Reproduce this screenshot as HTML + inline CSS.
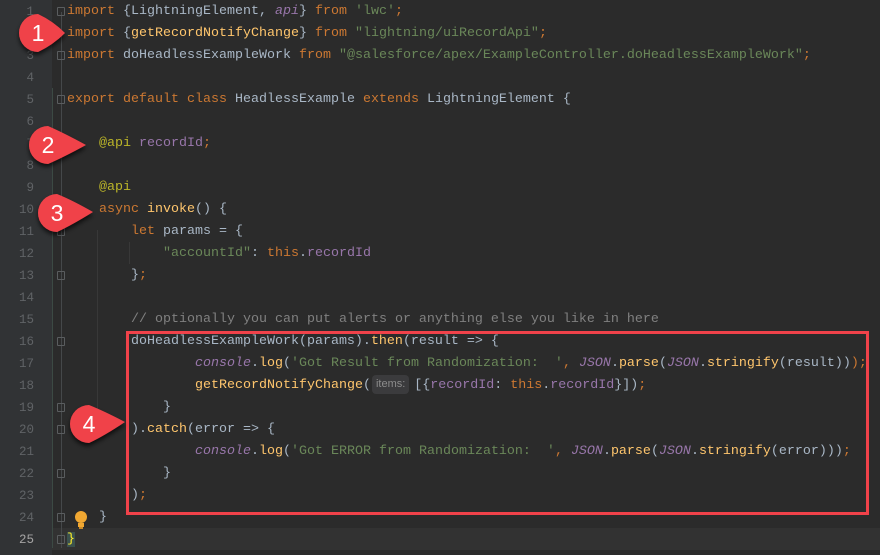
<!DOCTYPE html>
<html><head><meta charset="utf-8"><style>
html,body{margin:0;padding:0;}
body{width:880px;height:555px;background:#2b2b2b;position:relative;overflow:hidden;font-family:"Liberation Mono",monospace;font-size:13.33px;}
.g{position:absolute;left:0;top:0;width:52px;height:555px;background:#313335;}
.ln{position:absolute;left:0;width:34px;text-align:right;color:#606366;font-size:12.5px;line-height:22px;}
.l{position:absolute;left:67px;white-space:pre;line-height:22px;top:0;color:#a9b7c6;}
.k{color:#cc7832}.f{color:#ffc66d}.s{color:#6a8759}.p{color:#9876aa}.a{color:#bbb529}.c{color:#808080}.i{font-style:italic}
.hl{position:absolute;left:52px;right:0;top:528px;height:22px;background:#323232;}
.inl{display:inline-block;background:#3b3b3d;color:#8c8c8c;font-family:"Liberation Sans",sans-serif;font-size:11px;line-height:18px;height:19px;padding:0 4px;border-radius:4px;margin:0 5px 0 1px;vertical-align:1px;}
.box{position:absolute;left:126px;top:331px;width:737px;height:178px;border:3px solid #f0424a;}
.vg{position:absolute;width:1px;background:#3c4a44;}
.fold{position:absolute;left:57px;width:8px;height:9px;border:1px solid #5a5d5f;border-radius:1px;box-sizing:border-box;}
</style></head><body>
<div class="g"></div>
<div class="hl"></div>
<div class="vg" style="left:52px;top:88px;height:460px;"></div>
<div class="vg" style="left:61px;top:12px;height:536px;background:#45484a"></div>
<div class="vg" style="left:97px;top:230px;height:180px;background:#383838"></div>
<div class="vg" style="left:129px;top:242px;height:22px;background:#383838"></div>
<div id="nums"></div>
<div class="l" style="top:1px"><span class="k">import </span>{LightningElement, <span class="p i">api</span>} <span class="k">from </span><span class="s">'lwc'</span><span class="k">;</span></div>
<div class="l" style="top:23px"><span class="k">import </span>{<span class="f">getRecordNotifyChange</span>} <span class="k">from </span><span class="s">"lightning/uiRecordApi"</span><span class="k">;</span></div>
<div class="l" style="top:45px"><span class="k">import </span>doHeadlessExampleWork <span class="k">from </span><span class="s">"@salesforce/apex/ExampleController.doHeadlessExampleWork"</span><span class="k">;</span></div>
<div class="l" style="top:89px"><span class="k">export default class </span>HeadlessExample <span class="k">extends </span>LightningElement {</div>
<div class="l" style="top:133px">    <span class="a">@api </span><span class="p">recordId</span><span class="k">;</span></div>
<div class="l" style="top:177px">    <span class="a">@api</span></div>
<div class="l" style="top:199px">    <span class="k">async </span><span class="f">invoke</span>() {</div>
<div class="l" style="top:221px">        <span class="k">let </span>params = {</div>
<div class="l" style="top:243px">            <span class="s">"accountId"</span>: <span class="k">this</span>.<span class="p">recordId</span></div>
<div class="l" style="top:265px">        }<span class="k">;</span></div>
<div class="l" style="top:309px">        <span class="c">// optionally you can put alerts or anything else you like in here</span></div>
<div class="l" style="top:331px">        doHeadlessExampleWork(params).<span class="f">then</span>(result =&gt; {</div>
<div class="l" style="top:353px">                <span class="p i">console</span>.<span class="f">log</span>(<span class="s">'Got Result from Randomization:  '</span><span class="k">, </span><span class="p i">JSON</span>.<span class="f">parse</span>(<span class="p i">JSON</span>.<span class="f">stringify</span>(result))<span class="k">)</span><span class="k">;</span></div>
<div class="l" style="top:375px">                <span class="f">getRecordNotifyChange</span>(<span class="inl">items:</span>[{<span class="p">recordId</span>: <span class="k">this</span>.<span class="p">recordId</span>}])<span class="k">;</span></div>
<div class="l" style="top:397px">            }</div>
<div class="l" style="top:419px">        ).<span class="f">catch</span>(error =&gt; {</div>
<div class="l" style="top:441px">                <span class="p i">console</span>.<span class="f">log</span>(<span class="s">'Got ERROR from Randomization:  '</span><span class="k">, </span><span class="p i">JSON</span>.<span class="f">parse</span>(<span class="p i">JSON</span>.<span class="f">stringify</span>(error)))<span class="k">;</span></div>
<div class="l" style="top:463px">            }</div>
<div class="l" style="top:485px">        )<span class="k">;</span></div>
<div class="l" style="top:507px">    }</div>
<div class="l" style="top:529px"><span style="color:#ffef28;background:#3b514d">}</span></div>
<div class="box"></div>
<svg style="position:absolute;left:73px;top:510px" width="16" height="20" viewBox="0 0 16 20"><circle cx="8" cy="7" r="6" fill="#f0a732"/><rect x="5" y="13" width="6" height="4" fill="#f0a732"/><rect x="6" y="17" width="4" height="2" fill="#c98a28"/></svg>
<svg style="position:absolute;left:0;top:0" width="140" height="460">
<defs><filter id="sh" x="-30%" y="-30%" width="160%" height="160%"><feDropShadow dx="0" dy="3" stdDeviation="2.5" flood-color="#000" flood-opacity="0.7"/></filter></defs>
<g fill="#f0424a" filter="url(#sh)">
<path d="M38 14 A19 19 0 1 0 38 52 Q53 45 65 33 Q53 21 38 14Z"/>
<path d="M48 126 A19 19 0 1 0 48 164 Q64 157 86 145 Q64 133 48 126Z"/>
<path d="M57 194 A19 19 0 1 0 57 232 Q72 225 93 212 Q72 200 57 194Z"/>
<path d="M89 405 A19 19 0 1 0 89 443 Q104 436 125 422 Q104 411 89 405Z"/>
</g>
<g fill="#fff" font-family="Liberation Sans, sans-serif" font-size="23" text-anchor="middle">
<text x="38" y="41">1</text><text x="48" y="153">2</text><text x="57" y="221">3</text><text x="89" y="432">4</text>
</g></svg>
<script>
var n=document.getElementById('nums'),h='';
for(var i=1;i<=25;i++){h+='<div class="ln" style="top:'+((i-1)*22+1)+'px;'+(i==25?'color:#a4a3a3':'')+'">'+i+'</div>';}
n.innerHTML=h;
[1,3,5,11,13,16,19,20,22,24,25].forEach(function(i){var d=document.createElement('div');d.className='fold';d.style.top=((i-1)*22+7)+'px';document.body.insertBefore(d,document.querySelector('.l'));});
</script>
</body></html>
